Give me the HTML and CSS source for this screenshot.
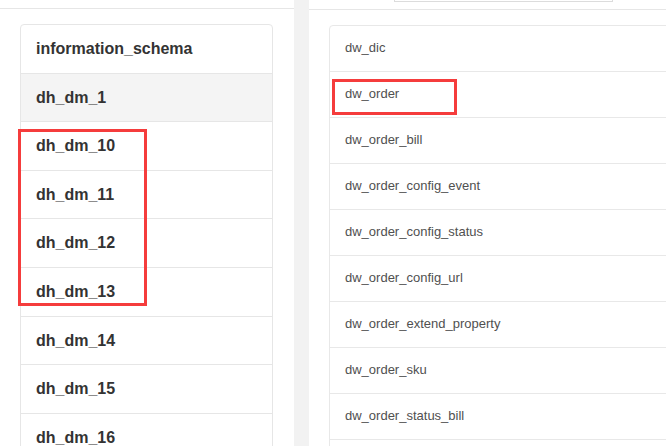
FILE: index.html
```html
<!DOCTYPE html>
<html lang="en">
<head>
    <meta charset="UTF-8">
    <meta name="viewport" content="width=device-width, initial-scale=1.0">
    <title>Schemas</title>
    <link rel="stylesheet" href="styles.css">
</head>
<body>

    <div class="page">
        <div class="side">
            <div class="topbar"></div>
            <div class="db-list">
                <div class="db-item">information_schema</div>
                <div class="db-item active">dh_dm_1</div>
                <div class="db-item">dh_dm_10</div>
                <div class="db-item">dh_dm_11</div>
                <div class="db-item">dh_dm_12</div>
                <div class="db-item">dh_dm_13</div>
                <div class="db-item">dh_dm_14</div>
                <div class="db-item">dh_dm_15</div>
                <div class="db-item">dh_dm_16</div>
            </div>
        </div>

        <div class="gutter"></div>

        <div class="main">
            <div class="topbar">
                <div class="search"></div>
            </div>
            <div class="table-list">
                <div class="table-item">dw_dic</div>
                <div class="table-item">dw_order</div>
                <div class="table-item">dw_order_bill</div>
                <div class="table-item">dw_order_config_event</div>
                <div class="table-item">dw_order_config_status</div>
                <div class="table-item">dw_order_config_url</div>
                <div class="table-item">dw_order_extend_property</div>
                <div class="table-item">dw_order_sku</div>
                <div class="table-item">dw_order_status_bill</div>
            </div>
        </div>
    </div>

    <!-- annotation boxes -->
    <div class="mark mark-db"></div>
    <div class="mark mark-table"></div>

</body>
</html>
```

FILE: styles.css
```css
* {
    box-sizing: border-box;
}

body {
    margin: 0;
    height: 446px;
    overflow: hidden;
    background: #fff;
    font-family: "Liberation Sans", Arial, sans-serif;
    position: relative;
}

.page {
    display: flex;
    flex-direction: row;
    height: 100%;
}

.side {
    width: 294px;
    flex-shrink: 0;
}

.gutter {
    width: 15px;
    flex-shrink: 0;
    background: #f2f2f2;
}

.main {
    flex: 1;
    overflow: hidden;
}

.side .topbar {
    height: 9px;
    border-bottom: 1px solid #e6e6e6;
}

.main .topbar {
    height: 10px;
    border-bottom: 1px solid #e6e6e6;
}

.search {
    width: 219px;
    height: 2px;
    margin-left: 85px;
    border: 1px solid #dcdcdc;
    border-top: none;
}

.db-list {
    margin: 15px 21px 0 20px;
    border: 1px solid #e6e6e6;
    border-radius: 4px 4px 0 0;
}

.db-item {
    padding: 13px 15px;
    line-height: 21.6px;
    font-size: 16px;
    font-weight: bold;
    color: #333;
    border-bottom: 1px solid #e6e6e6;
}

.db-item.active {
    background-color: #f4f4f4;
}

.table-list {
    width: 380px;
    margin: 15px 0 0 20px;
    padding-bottom: 30px;
    border: 1px solid #e8e8e8;
    border-radius: 4px 4px 0 0;
}

.table-item {
    padding: 11px 15px 13px;
    line-height: 21px;
    font-size: 13px;
    color: #505050;
    border-bottom: 1px solid #e8e8e8;
}

.mark {
    position: absolute;
    border: 3px solid #f53c3c;
}

.mark-db {
    left: 18px;
    top: 129px;
    width: 129px;
    height: 177px;
}

.mark-table {
    left: 332px;
    top: 79px;
    width: 125px;
    height: 36px;
}
```
